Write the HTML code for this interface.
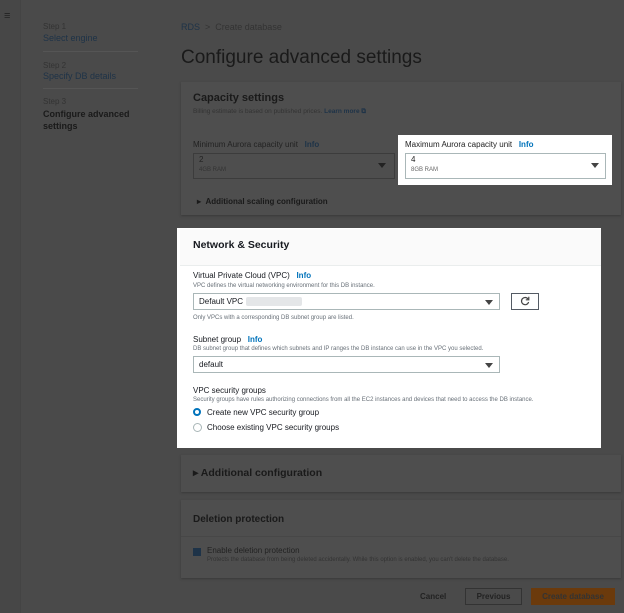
<!DOCTYPE html><html><head><style>
body{margin:0;width:624px;height:613px;background:#4a4a4a;font-family:"Liberation Sans",sans-serif;position:relative;overflow:hidden}
.a{position:absolute;white-space:nowrap}
.p{position:absolute;background:#4e4e4e;box-shadow:0 1px 2px #3a3a3a}
.sel{position:absolute;border:1px solid #aab7b8;background:#fff;box-sizing:border-box}
.tri{position:absolute;width:0;height:0;border-left:4px solid transparent;border-right:4px solid transparent;border-top:5px solid #444}
.info{color:#0073bb;font-weight:bold}
</style></head><body>
<div class="a" style="left:0;top:0;width:20px;height:613px;background:#474747;border-right:1px solid #444"></div>
<div class="a" style="left:4px;top:10px;color:#222;font-size:11px">≡</div>
<div class="a" style="left:43px;top:22px;font-size:8px;color:#333">Step 1</div>
<div class="a" style="left:43px;top:33px;font-size:9px;color:#1e3348">Select engine</div>
<div class="a" style="left:43px;top:51px;width:95px;height:1px;background:#555"></div>
<div class="a" style="left:43px;top:61px;font-size:8px;color:#333">Step 2</div>
<div class="a" style="left:43px;top:71px;font-size:9px;color:#1e3348">Specify DB details</div>
<div class="a" style="left:43px;top:88px;width:95px;height:1px;background:#555"></div>
<div class="a" style="left:43px;top:97px;font-size:8px;color:#333">Step 3</div>
<div class="a" style="left:43px;top:108px;font-size:9px;font-weight:bold;color:#1a1a1a;line-height:12px">Configure advanced<br>settings</div>
<div class="a" style="left:181px;top:22px;font-size:9px;color:#1e3348">RDS &nbsp;<span style="color:#333">&gt; &nbsp;Create database</span></div>
<div class="a" style="left:181px;top:47px;font-size:19px;color:#1a1a1a">Configure advanced settings</div>

<div class="p" style="left:181px;top:82px;width:440px;height:133px"></div>
<div class="a" style="left:193px;top:92px;font-size:11px;font-weight:bold;color:#1a1a1a">Capacity settings</div>
<div class="a" style="left:193px;top:108px;font-size:6.5px;color:#333">Billing estimate is based on published prices. <b style="color:#1e3348">Learn more ⧉</b></div>
<div class="a" style="left:193px;top:140px;font-size:8px;color:#222">Minimum Aurora capacity unit &nbsp; <b style="color:#1e3348">Info</b></div>
<div class="a" style="left:193px;top:153px;width:202px;height:26px;border:1px solid #3c3c3c;box-sizing:border-box"></div>
<div class="a" style="left:199px;top:155px;font-size:8px;color:#222">2</div>
<div class="a" style="left:199px;top:167px;font-size:6px;color:#333">4GB RAM</div>
<div class="tri" style="left:378px;top:163px;border-top-color:#222"></div>
<div class="a" style="left:197px;top:197px;font-size:8px;font-weight:bold;color:#1a1a1a">▸ &nbsp;Additional scaling configuration</div>

<div class="a" style="left:398px;top:135px;width:214px;height:50px;background:#fff"></div>
<div class="a" style="left:405px;top:140px;font-size:8px;color:#222">Maximum Aurora capacity unit &nbsp; <span class="info">Info</span></div>
<div class="sel" style="left:405px;top:153px;width:201px;height:26px"></div>
<div class="a" style="left:411px;top:155px;font-size:8px;color:#222">4</div>
<div class="a" style="left:411px;top:167px;font-size:6px;color:#666">8GB RAM</div>
<div class="tri" style="left:591px;top:163px"></div>

<div class="a" style="left:177px;top:228px;width:424px;height:220px;background:#fff"></div>
<div class="a" style="left:180px;top:229px;width:421px;height:36px;background:#fafafa;border-bottom:1px solid #eaeded"></div>
<div class="a" style="left:193px;top:239px;font-size:10.5px;font-weight:bold;color:#16191f">Network &amp; Security</div>
<div class="a" style="left:193px;top:271px;font-size:8px;color:#16191f">Virtual Private Cloud (VPC) &nbsp; <span class="info">Info</span></div>
<div class="a" style="left:193px;top:283px;font-size:6px;color:#687078">VPC defines the virtual networking environment for this DB instance.</div>
<div class="sel" style="left:193px;top:293px;width:307px;height:17px"></div>
<div class="a" style="left:199px;top:297px;font-size:8px;color:#16191f">Default VPC</div>
<div class="a" style="left:246px;top:297px;width:56px;height:9px;background:#e4e6e8;border-radius:2px"></div>
<div class="tri" style="left:485px;top:300px"></div>
<div class="sel" style="left:511px;top:293px;width:28px;height:17px;border-color:#545b64"></div>
<svg class="a" style="left:520px;top:296px" width="10" height="10" viewBox="0 0 10 10"><path d="M8.2 3.2A3.6 3.6 0 1 0 8.6 6" fill="none" stroke="#444" stroke-width="1.2"/><path d="M8.8 0.8v3h-3" fill="none" stroke="#444" stroke-width="1.2"/></svg>
<div class="a" style="left:193px;top:315px;font-size:6px;color:#687078">Only VPCs with a corresponding DB subnet group are listed.</div>
<div class="a" style="left:193px;top:335px;font-size:8px;color:#16191f">Subnet group &nbsp; <span class="info">Info</span></div>
<div class="a" style="left:193px;top:346px;font-size:6px;color:#687078">DB subnet group that defines which subnets and IP ranges the DB instance can use in the VPC you selected.</div>
<div class="sel" style="left:193px;top:356px;width:307px;height:17px"></div>
<div class="a" style="left:199px;top:360px;font-size:8px;color:#16191f">default</div>
<div class="tri" style="left:485px;top:363px"></div>
<div class="a" style="left:193px;top:386px;font-size:8px;color:#16191f">VPC security groups</div>
<div class="a" style="left:193px;top:397px;font-size:6px;color:#687078">Security groups have rules authorizing connections from all the EC2 instances and devices that need to access the DB instance.</div>
<div class="a" style="left:193px;top:408px;width:4px;height:4px;border:2.5px solid #0073bb;border-radius:50%"></div>
<div class="a" style="left:207px;top:408px;font-size:8px;color:#16191f">Create new VPC security group</div>
<div class="a" style="left:193px;top:423px;width:7px;height:7px;border:1px solid #aab7b8;border-radius:50%"></div>
<div class="a" style="left:207px;top:423px;font-size:8px;color:#16191f">Choose existing VPC security groups</div>

<div class="p" style="left:181px;top:455px;width:440px;height:37px"></div>
<div class="a" style="left:193px;top:467px;font-size:10.5px;font-weight:bold;color:#1a1a1a">▸ Additional configuration</div>
<div class="p" style="left:181px;top:500px;width:440px;height:78px"></div>
<div class="a" style="left:193px;top:514px;font-size:10px;font-weight:bold;color:#1a1a1a">Deletion protection</div>
<div class="a" style="top:536px;width:440px;height:1px;background:#474747;left:181px"></div>
<div class="a" style="left:193px;top:548px;width:8px;height:8px;background:#1e3348"></div>
<div class="a" style="left:207px;top:546px;font-size:8px;color:#222">Enable deletion protection</div>
<div class="a" style="left:207px;top:557px;font-size:6px;color:#333">Protects the database from being deleted accidentally. While this option is enabled, you can't delete the database.</div>
<div class="a" style="left:420px;top:592px;font-size:8px;font-weight:bold;color:#222">Cancel</div>
<div class="a" style="left:465px;top:588px;width:57px;height:17px;border:1px solid #333;box-sizing:border-box;font-size:8px;font-weight:bold;color:#222;text-align:center;line-height:15px">Previous</div>
<div class="a" style="left:531px;top:588px;width:84px;height:17px;background:#6b3a0c;font-size:8px;font-weight:bold;color:#333;text-align:center;line-height:17px">Create database</div>
</body></html>
